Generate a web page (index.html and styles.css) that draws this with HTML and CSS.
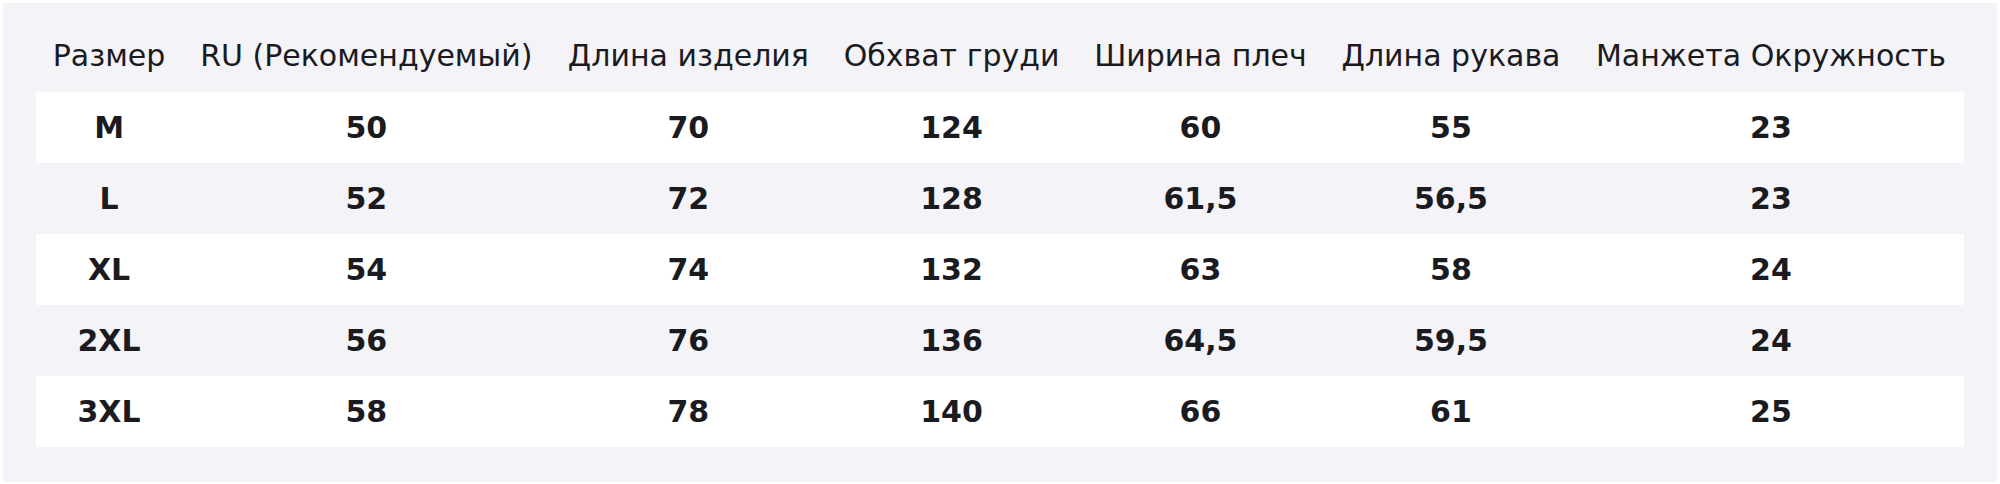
FILE: index.html
```html
<!DOCTYPE html>
<html lang="ru">
<head>
<meta charset="utf-8">
<title>Таблица размеров</title>
<link rel="stylesheet" href="styles.css">
</head>
<body>
<div class="sheet">
  <table class="sizes">
    <thead>
      <tr>
        <th>Размер</th>
        <th>RU (Рекомендуемый)</th>
        <th>Длина изделия</th>
        <th>Обхват груди</th>
        <th>Ширина плеч</th>
        <th>Длина рукава</th>
        <th>Манжета Окружность</th>
      </tr>
    </thead>
    <tbody>
      <tr><td>M</td><td>50</td><td>70</td><td>124</td><td>60</td><td>55</td><td>23</td></tr>
      <tr><td>L</td><td>52</td><td>72</td><td>128</td><td>61,5</td><td>56,5</td><td>23</td></tr>
      <tr><td>XL</td><td>54</td><td>74</td><td>132</td><td>63</td><td>58</td><td>24</td></tr>
      <tr><td>2XL</td><td>56</td><td>76</td><td>136</td><td>64,5</td><td>59,5</td><td>24</td></tr>
      <tr><td>3XL</td><td>58</td><td>78</td><td>140</td><td>66</td><td>61</td><td>25</td></tr>
    </tbody>
  </table>
</div>
</body>
</html>
```
FILE: styles.css
```css
html, body {
  margin: 0;
  padding: 0;
  background: #ffffff;
}

body {
  font-family: "DejaVu Sans", "Noto Sans", sans-serif;
  color: #1b1b1f;
}

.sheet {
  margin: 3px;
  padding: 33px 33px 35px;
  background: #f3f3f8;
}

.sizes {
  width: 100%;
  border-collapse: collapse;
  border-spacing: 0;
}

.sizes th {
  font-size: 30px;
  font-weight: normal;
  line-height: normal;
  padding: 2px 16px 19px;
  white-space: nowrap;
  text-align: center;
}

.sizes td {
  font-size: 30px;
  font-weight: bold;
  line-height: normal;
  padding: 18px 16px;
  text-align: center;
  white-space: nowrap;
}

.sizes tbody tr:nth-child(odd) {
  background: #ffffff;
}
```
